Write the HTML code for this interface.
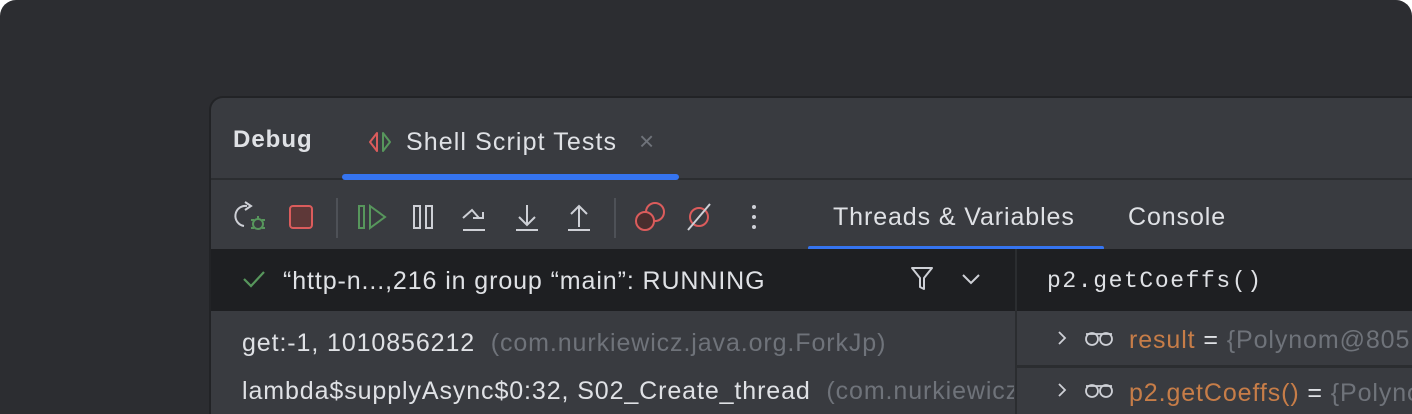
<!DOCTYPE html>
<html><head><style>
*{margin:0;padding:0;box-sizing:border-box}
html,body{width:1412px;height:414px;background:#fff;overflow:hidden}
body{font-family:"Liberation Sans",sans-serif;}
.outer{position:absolute;left:0;top:0;width:1412px;height:414px;background:#2c2d31;border-radius:16px 16px 0 0;overflow:hidden}
.panel{position:absolute;left:209px;top:96px;width:1203px;height:318px;background:#393b40;border:2px solid #222326;border-bottom:none;border-right:none;border-radius:14px 0 0 0;overflow:hidden}
.t{position:absolute;white-space:nowrap;color:#dfe1e5;font-size:25px;letter-spacing:0.9px;line-height:30px}
.g{color:#6f737a}
.o{color:#c77d48}
.mono{font-family:"Liberation Mono",monospace;font-size:23px;letter-spacing:1.6px}
</style></head><body>
<div class="outer">
<div class="panel">
 <div style="position:absolute;left:0;top:80px;width:1300px;height:2px;background:#2b2d30"></div>
 <div style="position:absolute;left:131px;top:76px;width:337px;height:6px;background:#3574f0;border-radius:3px"></div>
 <div class="t" style="left:22px;top:27px;font-weight:bold;font-size:24px;letter-spacing:1px">Debug</div>
 <svg style="position:absolute;left:156px;top:32px" width="30" height="24" viewBox="0 0 30 24"><path d="M10 3 L3 12 L10 21 Z" fill="none" stroke="#db5c5c" stroke-width="2" stroke-linejoin="round"/><path d="M16 3 L23 12 L16 21 Z" fill="none" stroke="#57965c" stroke-width="2" stroke-linejoin="round"/></svg>
 <div class="t" style="left:195px;top:29px;letter-spacing:1.1px">Shell Script Tests</div>
 <div class="t g" style="left:428px;top:28px;font-size:26px">×</div>

 <svg style="position:absolute;left:18px;top:100px" width="560" height="40" viewBox="0 0 560 40">
  <path d="M18 8 A10 10 0 1 0 15 28" fill="none" stroke="#ced0d6" stroke-width="2"/><path d="M16 4 L22 8 L16 12" fill="none" stroke="#ced0d6" stroke-width="2"/>
  <circle cx="29" cy="26" r="5" fill="none" stroke="#57965c" stroke-width="2"/><path d="M22 22h3M33 22h3M22 30h3M33 30h3M29 18v3" stroke="#57965c" stroke-width="2"/>
  <rect x="61" y="8" width="22" height="22" rx="3" fill="#5e3838" stroke="#db5c5c" stroke-width="2"/>
  <rect x="107" y="0" width="2" height="40" fill="#4e5157"/>
  <rect x="130" y="8" width="5" height="22" fill="none" stroke="#57965c" stroke-width="2"/><path d="M141 8 L156 19 L141 30 Z" fill="none" stroke="#57965c" stroke-width="2"/>
  <rect x="185" y="8" width="6" height="22" fill="none" stroke="#ced0d6" stroke-width="2"/><rect x="197" y="8" width="6" height="22" fill="none" stroke="#ced0d6" stroke-width="2"/>
  <path d="M234 20 L243 12 L250 20 M244 20 h10 v-6" fill="none" stroke="#ced0d6" stroke-width="2"/><path d="M234 32h22" stroke="#ced0d6" stroke-width="2"/>
  <path d="M298 7v19 M290 19l8 8 8-8 M287 32h22" fill="none" stroke="#ced0d6" stroke-width="2"/>
  <path d="M350 9v20 M342 16l8-8 8 8 M339 32h22" fill="none" stroke="#ced0d6" stroke-width="2"/>
  <rect x="385" y="0" width="2" height="40" fill="#4e5157"/>
  <circle cx="426" cy="14" r="9" fill="none" stroke="#db5c5c" stroke-width="2"/><circle cx="416" cy="23" r="9" fill="#4a2e2e" stroke="#db5c5c" stroke-width="2"/>
  <circle cx="470" cy="19" r="9" fill="none" stroke="#db5c5c" stroke-width="2"/><path d="M459 32 L481 6" stroke="#ced0d6" stroke-width="2"/>
  <circle cx="525" cy="9" r="2" fill="#ced0d6"/><circle cx="525" cy="19" r="2" fill="#ced0d6"/><circle cx="525" cy="29" r="2" fill="#ced0d6"/>
 </svg>
 <div class="t" style="left:622px;top:104px">Threads &amp; Variables</div>
 <div class="t" style="left:917px;top:104px">Console</div>
 <div style="position:absolute;left:597px;top:148px;width:296px;height:4px;background:#3574f0;border-radius:2px"></div>

 <div style="position:absolute;left:0;top:151px;width:1300px;height:62px;background:#1e1f22"></div>
 <div style="position:absolute;left:804px;top:151px;width:2px;height:170px;background:#2b2d30"></div>
 <svg style="position:absolute;left:30px;top:170px" width="26" height="22"><path d="M3 11 L10 18 L23 4" fill="none" stroke="#57965c" stroke-width="2.2"/></svg>
 <div class="t" style="left:72px;top:168px">“http-n...,216 in group “main”: RUNNING</div>
 <svg style="position:absolute;left:698px;top:166px" width="80" height="28"><path d="M3 4 H23 L15 14 V25 L11 23 V14 Z" fill="none" stroke="#ced0d6" stroke-width="2" stroke-linejoin="round"/><path d="M54 11 L62 19 L70 11" fill="none" stroke="#ced0d6" stroke-width="2"/></svg>
 <div class="t mono" style="left:836px;top:168px">p2.getCoeffs()</div>

 <div class="t" style="left:31px;top:230px">get:-1, 1010856212 <span class="g">&nbsp;(com.nurkiewicz.java.org.ForkJp)</span></div>
 <div class="t" style="left:31px;top:278px;width:772px;overflow:hidden">lambda$supplyAsync$0:32, S02_Create_thread <span class="g">&nbsp;(com.nurkiewicz.java</span></div>
 <div style="position:absolute;left:806px;top:267px;width:500px;height:3px;background:#2b2d30"></div>
 <svg style="position:absolute;left:845px;top:231px" width="70" height="80"><path d="M3 3 L9 9 L3 15" fill="none" stroke="#ced0d6" stroke-width="1.8"/><circle cx="36" cy="10" r="6" fill="none" stroke="#ced0d6" stroke-width="1.8"/><circle cx="50" cy="10" r="6" fill="none" stroke="#ced0d6" stroke-width="1.8"/><path d="M30 5 H56" stroke="#ced0d6" stroke-width="1.8"/>
 <path d="M3 55 L9 61 L3 67" fill="none" stroke="#ced0d6" stroke-width="1.8"/><circle cx="36" cy="62" r="6" fill="none" stroke="#ced0d6" stroke-width="1.8"/><circle cx="50" cy="62" r="6" fill="none" stroke="#ced0d6" stroke-width="1.8"/><path d="M30 57 H56" stroke="#ced0d6" stroke-width="1.8"/></svg>
 <div class="t" style="left:918px;top:227px;width:285px;overflow:hidden"><span class="o">result</span> = <span class="g">{Polynom@805</span></div>
 <div class="t" style="left:918px;top:280px;width:285px;overflow:hidden"><span class="o">p2.getCoeffs()</span> = <span class="g">{Polynom</span></div>
</div>
</div>
</body></html>
